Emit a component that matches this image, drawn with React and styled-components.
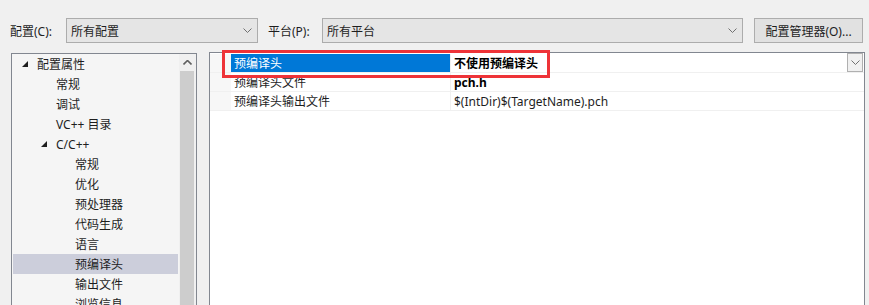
import React from "react"
import styled, { createGlobalStyle } from "styled-components"

const GlobalStyle = createGlobalStyle`
  html, body {
    margin: 0;
    padding: 0;
    background: #f0f0f0;
    width: 869px;
    height: 305px;
    overflow: hidden;
  }
  body {
    font-family: "Noto Sans", "Noto Sans CJK SC", sans-serif;
    font-size: 12px;
    color: #1e1e1e;
  }
`

const treeItems = [
  { label: "配置属性", level: 0, open: true },
  { label: "常规", level: 1 },
  { label: "调试", level: 1 },
  { label: "VC++ 目录", level: 1 },
  { label: "C/C++", level: 1, open: true },
  { label: "常规", level: 2 },
  { label: "优化", level: 2 },
  { label: "预处理器", level: 2 },
  { label: "代码生成", level: 2 },
  { label: "语言", level: 2 },
  { label: "预编译头", level: 2, selected: true },
  { label: "输出文件", level: 2 },
  { label: "浏览信息", level: 2 },
]

const properties = [
  { name: "预编译头", value: "不使用预编译头", bold: true, selected: true },
  { name: "预编译头文件", value: "pch.h", bold: true },
  { name: "预编译头输出文件", value: "$(IntDir)$(TargetName).pch" },
]

const Chevron = ({ up }) => (
  <svg width="9" height="5" viewBox="0 0 9 5">
    <polyline
      points={up ? "0.5,4.5 4.5,0.5 8.5,4.5" : "0.5,0.5 4.5,4.5 8.5,0.5"}
      fill="none"
      stroke={up ? "#606060" : "#707070"}
      strokeWidth={up ? 1.6 : 1}
    />
  </svg>
)

const Combo = ({ text, width }) => (
  <ComboBox $width={width}>
    <span>{text}</span>
    <Chevron />
  </ComboBox>
)

export default function App() {
  return (
    <Page>
      <GlobalStyle />
      <TopBar>
        <Label $width={56}>配置(C):</Label>
        <Combo text="所有配置" width={192} />
        <Label $width={54} $gap={10}>平台(P):</Label>
        <Combo text="所有平台" width={421} />
        <Button>配置管理器(O)...</Button>
      </TopBar>
      <Main>
        <Tree>
          <TreeList>
            {treeItems.map((item, i) => (
              <TreeRow key={i} $level={item.level} $selected={item.selected}>
                <Toggle>
                  {item.open && (
                    <svg width="6" height="6" viewBox="0 0 6 6">
                      <polygon points="6,0 6,6 0,6" fill="#1e1e1e" />
                    </svg>
                  )}
                </Toggle>
                {item.label}
              </TreeRow>
            ))}
          </TreeList>
          <ScrollBar>
            <ScrollUp>
              <Chevron up />
            </ScrollUp>
            <Thumb />
          </ScrollBar>
        </Tree>
        <Grid>
          {properties.map((p, i) => (
            <PropRow key={i}>
              <Gutter />
              <NameCell $selected={p.selected}>{p.name}</NameCell>
              <ValueCell $bold={p.bold}>
                <span>{p.value}</span>
                {p.selected && (
                  <DropButton>
                    <Chevron />
                  </DropButton>
                )}
              </ValueCell>
            </PropRow>
          ))}
          <Highlight />
        </Grid>
      </Main>
    </Page>
  )
}

const Page = styled.div`
  padding-top: 18px;
`

const TopBar = styled.div`
  display: flex;
  align-items: center;
  height: 25px;
  padding-left: 10px;
`

const Label = styled.div`
  width: ${p => p.$width}px;
  margin-left: ${p => p.$gap || 0}px;
  flex-shrink: 0;
  white-space: nowrap;
`

const ComboBox = styled.div`
  box-sizing: border-box;
  width: ${p => p.$width}px;
  height: 25px;
  display: flex;
  align-items: center;
  justify-content: space-between;
  padding: 0 5px 0 4px;
  background: #e5e5e5;
  border: 1px solid #acacac;
  flex-shrink: 0;
`

const Button = styled.div`
  box-sizing: border-box;
  width: 109px;
  height: 25px;
  margin-left: 11px;
  display: flex;
  align-items: center;
  justify-content: center;
  background: #e1e1e1;
  border: 1px solid #adadad;
  white-space: nowrap;
`

const Main = styled.div`
  display: flex;
  align-items: flex-start;
  margin-top: 10px;
`

const Tree = styled.div`
  box-sizing: border-box;
  width: 186px;
  height: 300px;
  margin-left: 11px;
  display: flex;
  background: #f5f5f5;
  border: 1px solid #828790;
`

const TreeList = styled.div`
  flex: 1;
  padding-left: 1px;
`

const TreeRow = styled.div`
  height: 20px;
  display: flex;
  align-items: center;
  padding-left: ${p => 9 + p.$level * 19}px;
  background: ${p => (p.$selected ? "#cccedb" : "transparent")};
  white-space: nowrap;
`

const Toggle = styled.span`
  width: 15px;
  display: flex;
  align-items: center;
  flex-shrink: 0;
`

const ScrollBar = styled.div`
  width: 17px;
  display: flex;
  flex-direction: column;
  background: #f0f0f0;
  border-left: 1px solid #f5f5f5;
`

const ScrollUp = styled.div`
  height: 17px;
  display: flex;
  align-items: center;
  justify-content: center;
`

const Thumb = styled.div`
  flex: 1;
  margin: 0 2px 0 1px;
  background: #cdcdcd;
`

const Grid = styled.div`
  position: relative;
  box-sizing: border-box;
  width: 656px;
  height: 300px;
  margin-left: 12px;
  margin-top: -1px;
  padding-top: 1px;
  background: #ffffff;
  border: 1px solid #828790;
`

const PropRow = styled.div`
  display: grid;
  grid-template-columns: 21px 219px 1fr;
  height: 19px;
  border-bottom: 1px solid #f0f0f0;
  box-sizing: border-box;
  height: 19px;
`

const Gutter = styled.div`
  background: #f7f7f7;
`

const NameCell = styled.div`
  display: flex;
  align-items: center;
  padding-left: 3px;
  background: ${p => (p.$selected ? "#0078d7" : "transparent")};
  color: ${p => (p.$selected ? "#ffffff" : "#1e1e1e")};
  white-space: nowrap;
`

const ValueCell = styled.div`
  display: flex;
  align-items: center;
  justify-content: space-between;
  padding-left: 3px;
  border-left: 1px solid #f0f0f0;
  font-weight: ${p => (p.$bold ? 700 : 400)};
  color: ${p => (p.$bold ? "#000000" : "#1e1e1e")};
  white-space: nowrap;
`

const DropButton = styled.div`
  box-sizing: border-box;
  width: 16px;
  height: 19px;
  margin-right: 1px;
  margin-top: -2px;
  display: flex;
  align-items: center;
  justify-content: center;
  background: #f0f0f0;
  border: 1px solid #b0b0b0;
`

const Highlight = styled.div`
  position: absolute;
  left: 12px;
  top: -3px;
  width: 328px;
  height: 28px;
  box-sizing: border-box;
  border: 3px solid #ee3338;
  pointer-events: none;
`
